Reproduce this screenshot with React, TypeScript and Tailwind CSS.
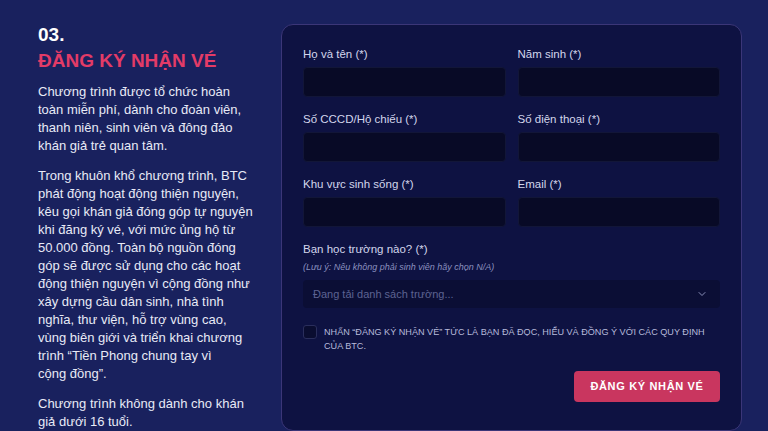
import { ChevronDown } from 'lucide-react';

const font = { fontFamily: '"Liberation Sans", Arial, Helvetica, sans-serif' };

function Field({ label }: { label: string }) {
  return (
    <div className="flex flex-col">
      <label className="text-[11.5px] leading-4 text-[#d3d6ec]">{label}</label>
      <input
        type="text"
        className="mt-[5px] h-[30px] w-full rounded-[4px] border border-[#121638] bg-[#080a26] px-3 text-[12px] text-white outline-none"
      />
    </div>
  );
}

export default function App() {
  return (
    <div className="h-[431px] w-[768px] overflow-hidden bg-[#19215e]" style={font}>
      <div className="flex gap-[26px] pl-[38px] pt-[24px]">
        {/* left intro column */}
        <div className="-mt-[2px] w-[217px] shrink-0">
          <h2 className="text-[19px] font-bold leading-[26px] text-white">03.</h2>
          <h2 className="text-[19px] font-bold leading-[26px] text-[#e33b67]">ĐĂNG KÝ NHẬN VÉ</h2>
          <div className="mt-[9px] flex flex-col gap-[12px] text-[13px] leading-[18px] text-[#e8eaf6]">
            <p>
              Chương trình được tổ chức hoàn toàn miễn phí, dành cho đoàn viên, thanh niên, sinh viên và đông đảo
              khán giả trẻ quan tâm.
            </p>
            <p>
              Trong khuôn khổ chương trình, BTC phát động hoạt động thiện nguyện, kêu gọi khán giả đóng góp tự nguyện
              khi đăng ký vé, với mức ủng hộ từ 50.000 đồng. Toàn bộ nguồn đóng góp sẽ được sử dụng cho các hoạt
              động thiện nguyện vì cộng đồng như xây dựng cầu dân sinh, nhà tình nghĩa, thư viện, hỗ trợ vùng cao,
              vùng biên giới và triển khai chương trình “Tiền Phong chung tay vì
              <br />
              cộng đồng”.
            </p>
            <p>Chương trình không dành cho khán giả dưới 16 tuổi.</p>
          </div>
        </div>

        {/* form card */}
        <form className="w-[461px] shrink-0 rounded-[12px] border border-[#3b3678] bg-[#0e1242] px-[21px] pb-[19px] pt-[21px]">
          <div className="grid grid-cols-2 gap-x-[12px] gap-y-[14px]">
            <Field label="Họ và tên (*)" />
            <Field label="Năm sinh (*)" />
            <Field label="Số CCCD/Hộ chiếu (*)" />
            <Field label="Số điện thoại (*)" />
            <Field label="Khu vực sinh sống (*)" />
            <Field label="Email (*)" />
          </div>

          <div className="mt-[14px]">
            <label className="block text-[11.5px] leading-4 text-[#d3d6ec]">Bạn học trường nào? (*)</label>
            <p className="mt-[4px] text-[9px] italic leading-3 text-[#8a90bf]">
              (Lưu ý: Nếu không phải sinh viên hãy chọn N/A)
            </p>
            <div className="mt-[7px] flex h-[28px] items-center justify-between rounded-[4px] bg-[#0b0e35] pl-[10px] pr-[12px]">
              <span className="text-[11px] text-[#5d6392]">Đang tải danh sách trường...</span>
              <ChevronDown className="h-3 w-3 text-[#8a8fb8]" strokeWidth={2} />
            </div>
          </div>

          <div className="mt-[17px] flex items-start gap-[7px]">
            <span className="h-[14px] w-[14px] shrink-0 rounded-[3px] border border-[#2a2e5c] bg-[#0a0d30]" />
            <p className="text-[9.1px] uppercase leading-[14px] text-[#b7bbdb]">
              Nhấn “Đăng ký nhận vé” tức là bạn đã đọc, hiểu và đồng ý với các quy định của BTC.
            </p>
          </div>

          <div className="mt-[18px] flex justify-end">
            <button
              type="button"
              className="h-[31px] w-[146px] rounded-[4px] bg-[#c9365f] text-[11px] font-bold tracking-[0.06em] text-white"
            >
              ĐĂNG KÝ NHẬN VÉ
            </button>
          </div>
        </form>
      </div>
    </div>
  );
}
